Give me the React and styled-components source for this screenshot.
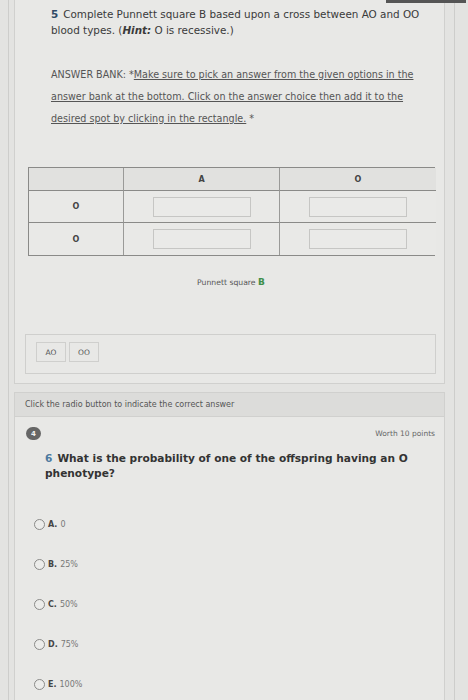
import React from "react";
import styled, { createGlobalStyle } from "styled-components";

const Global = createGlobalStyle`
  html, body { margin: 0; padding: 0; background: #e3e3e1; }
  body { font-family: "DejaVu Sans", Verdana, sans-serif; color: #333; }
`;

const Frame = styled.div`
  margin-left: 8px;
  width: 447px;
  min-height: 700px;
  border-left: 1px solid #cdcdcb;
  border-right: 1px solid #cdcdcb;
  box-sizing: border-box;
  padding: 0 9px 0 5px;
  position: relative;
`;

const TopShade = styled.div`
  position: absolute;
  top: 0;
  right: -12px;
  width: 80px;
  height: 3px;
  background: #555;
`;

const Panel = styled.section`
  background: #e8e8e6;
  border: 1px solid #d0d0ce;
  border-top: none;
  padding: 6px 10px 9px 13px;
`;

const QText = styled.p`
  margin: 0 0 0 23px;
  font-size: 10.4px;
  line-height: 16px;
  color: #3a3a3a;
  width: 380px;
`;

const QNum = styled.b`
  color: #2f4a66;
  margin-right: 5px;
`;

const Bank = styled.p`
  margin: 26px 0 0 23px;
  font-size: 9.6px;
  line-height: 22px;
  color: #555;
  width: 385px;
`;

const U = styled.span`
  text-decoration: underline;
`;

const Table = styled.div`
  margin-top: 37px;
  display: grid;
  grid-template-columns: 95px 156px 156px;
  grid-template-rows: 23px 32px 32px;
  border: 1px solid #8a8a88;
  width: 407px;
  box-sizing: border-box;
`;

const Cell = styled.div`
  display: flex;
  align-items: center;
  justify-content: center;
  border-right: ${p => (p.$last ? "none" : "1px solid #9a9a98")};
  border-bottom: ${p => (p.$bottom ? "none" : "1px solid #8a8a88")};
  background: ${p => (p.$head ? "#e1e1df" : "#e9e9e7")};
  font-size: 8px;
  font-weight: bold;
  color: #444;
`;

const Slot = styled.div`
  width: 96px;
  height: 18px;
  border: 1px solid #c6c6c4;
  background: #eaeae8;
`;

const Caption = styled.div`
  text-align: center;
  margin-top: 21px;
  font-size: 7.7px;
  color: #555;
  & b {
    color: #3e8e4a;
    font-size: 9px;
  }
`;

const BankBox = styled.div`
  margin-top: 47px;
  margin-left: -3px;
  width: 411px;
  height: 40px;
  box-sizing: border-box;
  border: 1px solid #cfcfcd;
  padding: 7px 10px;
  display: flex;
  gap: 3px;
  align-items: flex-start;
`;

const Chip = styled.div`
  width: 30px;
  height: 20px;
  box-sizing: border-box;
  border: 1px solid #cfcfcd;
  display: flex;
  align-items: center;
  justify-content: center;
  font-size: 7.5px;
  color: #555;
`;

const Instruction = styled.div`
  margin-top: 8px;
  background: #dcdcda;
  border: 1px solid #d0d0ce;
  height: 23px;
  display: flex;
  align-items: center;
  padding-left: 10px;
  font-size: 8px;
  color: #555;
`;

const Question = styled.section`
  background: #e8e8e6;
  border-left: 1px solid #d0d0ce;
  border-right: 1px solid #d0d0ce;
  padding: 10px 9px 20px 10px;
`;

const Meta = styled.div`
  display: flex;
  justify-content: space-between;
  align-items: center;
`;

const Badge = styled.span`
  width: 15px;
  height: 13px;
  border-radius: 7px;
  background: #666;
  color: #f2f2f2;
  font-size: 7px;
  font-weight: bold;
  display: flex;
  align-items: center;
  justify-content: center;
  margin-left: 1px;
`;

const Worth = styled.span`
  font-size: 7.5px;
  color: #666;
`;

const Q6 = styled.p`
  margin: 11px 0 0 20px;
  font-size: 10.6px;
  font-weight: bold;
  line-height: 15px;
  color: #333;
  width: 370px;
`;

const Q6Num = styled.span`
  color: #4d7aa0;
  margin-right: 5px;
`;

const Options = styled.div`
  margin-top: 37px;
  margin-left: 9px;
  display: flex;
  flex-direction: column;
  gap: 28px;
`;

const Option = styled.label`
  display: flex;
  align-items: center;
  gap: 3px;
  font-size: 8px;
  color: #777;
  height: 12px;
`;

const Radio = styled.span`
  width: 9px;
  height: 9px;
  border-radius: 50%;
  border: 1px solid #8a8a88;
  background: #ececea;
`;

const Letter = styled.b`
  color: #444;
  margin-right: 3px;
`;

const opts = [
  ["A.", "0"],
  ["B.", "25%"],
  ["C.", "50%"],
  ["D.", "75%"],
  ["E.", "100%"],
];

export default function App() {
  return (
    <>
      <Global />
      <Frame>
        <TopShade />
        <Panel>
          <QText>
            <QNum>5</QNum>Complete Punnett square B based upon a cross between AO and OO
            blood types. (<b><i>Hint:</i></b> O is recessive.)
          </QText>
          <Bank>
            ANSWER BANK: *<U>Make sure to pick an answer from the given options in the
            answer bank at the bottom. Click on the answer choice then add it to the
            desired spot by clicking in the rectangle.</U> *
          </Bank>
          <Table>
            <Cell $head />
            <Cell $head>A</Cell>
            <Cell $head $last>O</Cell>
            <Cell>O</Cell>
            <Cell><Slot /></Cell>
            <Cell $last><Slot /></Cell>
            <Cell $bottom>O</Cell>
            <Cell $bottom><Slot /></Cell>
            <Cell $bottom $last><Slot /></Cell>
          </Table>
          <Caption>
            Punnett square <b>B</b>
          </Caption>
          <BankBox>
            <Chip>AO</Chip>
            <Chip>OO</Chip>
          </BankBox>
        </Panel>
        <Instruction>Click the radio button to indicate the correct answer</Instruction>
        <Question>
          <Meta>
            <Badge>4</Badge>
            <Worth>Worth 10 points</Worth>
          </Meta>
          <Q6>
            <Q6Num>6</Q6Num>What is the probability of one of the offspring having an O
            phenotype?
          </Q6>
          <Options>
            {opts.map(([l, v]) => (
              <Option key={l}>
                <Radio />
                <span>
                  <Letter>{l}</Letter>
                  {v}
                </span>
              </Option>
            ))}
          </Options>
        </Question>
      </Frame>
    </>
  );
}
